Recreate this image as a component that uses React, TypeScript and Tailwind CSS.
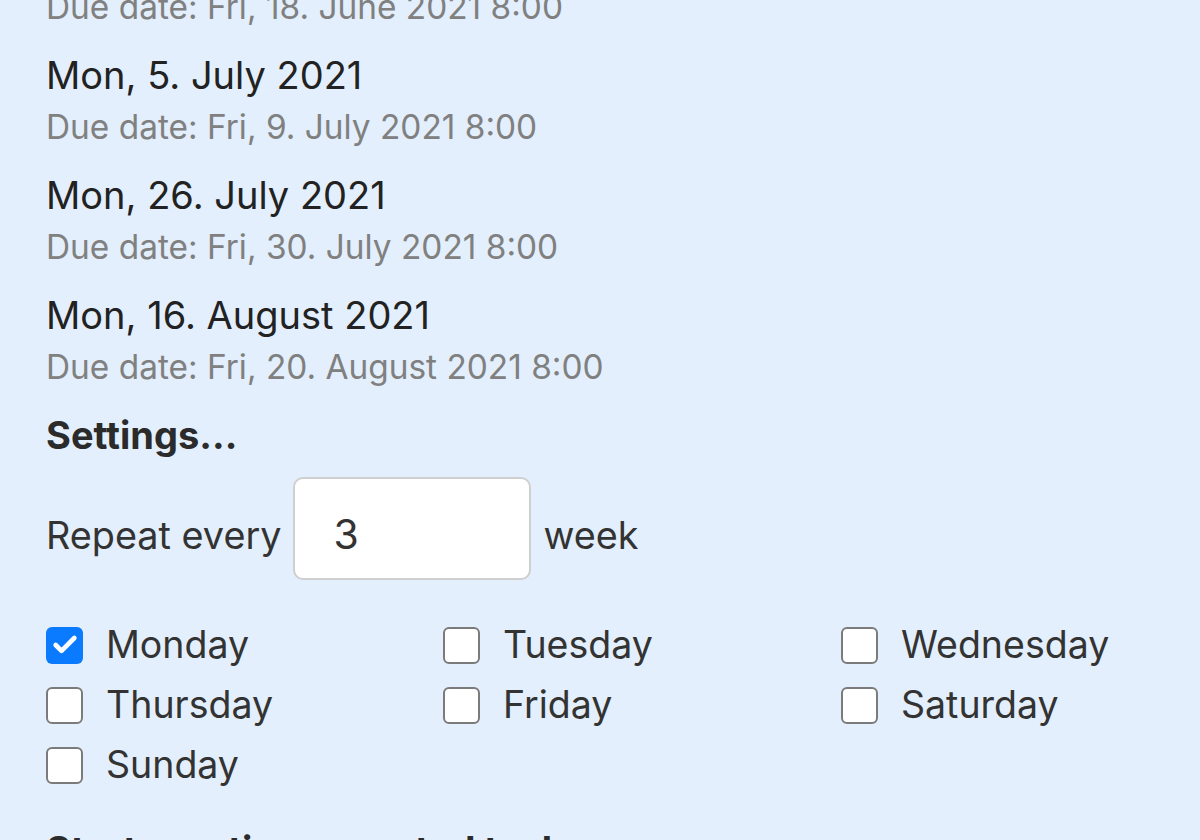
import { Check } from "lucide-react";

const entries = [
  { start: "Mon, 14. June 2021", due: "Due date: Fri, 18. June 2021 8:00" },
  { start: "Mon, 5. July 2021", due: "Due date: Fri, 9. July 2021 8:00" },
  { start: "Mon, 26. July 2021", due: "Due date: Fri, 30. July 2021 8:00" },
  { start: "Mon, 16. August 2021", due: "Due date: Fri, 20. August 2021 8:00" },
];

const days = [
  { name: "Monday", checked: true },
  { name: "Tuesday", checked: false },
  { name: "Wednesday", checked: false },
  { name: "Thursday", checked: false },
  { name: "Friday", checked: false },
  { name: "Saturday", checked: false },
  { name: "Sunday", checked: false },
];

function DayBox({ name, checked }: { name: string; checked: boolean }) {
  return (
    <label className="flex items-center gap-[23px] h-[36px]">
      {checked ? (
        <span className="flex h-[37px] w-[37px] items-center justify-center rounded-[6px] bg-[#0a7aff]">
          <Check className="h-[28px] w-[28px] text-white" strokeWidth={4} />
        </span>
      ) : (
        <span className="h-[37px] w-[37px] rounded-[6px] border-2 border-[#7b7b7b] bg-white" />
      )}
      <span className="text-[37.5px] leading-[44px] text-[#333333]">{name}</span>
    </label>
  );
}

export default function App() {
  return (
    <main
      className="h-[840px] w-full overflow-hidden bg-[#e3effc] pl-[46px]"
      style={{ fontFamily: "Inter, 'Noto Sans', sans-serif" }}
    >
      <div className="-mt-[69px]">
        {entries.map((e) => (
          <div key={e.start} className="mb-[16px]">
            <div className="text-[38px] leading-[48px] text-[#222222]">{e.start}</div>
            <div className="text-[33.4px] leading-[56px] text-[#808080]">{e.due}</div>
          </div>
        ))}

        <h2 className="mt-[20px] text-[38px] font-bold leading-[40px] text-[#2b2b2b]">Settings...</h2>

        <div className="mt-[22px] flex items-center gap-[12px] text-[37.8px] text-[#333333]">
          <span className="pt-[12px] leading-[44px]">Repeat every</span>
          <div className="flex h-[103px] w-[238px] items-center rounded-[10px] border-2 border-[#cfcfcf] bg-white pl-[38px] pt-[12px] text-[41px] text-[#333333]">
            3
          </div>
          <span className="pt-[12px] leading-[44px]">week</span>
        </div>

        <div className="mt-[47px] grid grid-cols-[397px_398px_1fr] gap-y-[24px]">
          {days.map((d) => (
            <DayBox key={d.name} name={d.name} checked={d.checked} />
          ))}
        </div>

        <h2 className="mt-[47px] text-[38px] font-bold leading-[40px] text-[#2b2b2b]">
          Start creating repeated tasks
        </h2>
      </div>
    </main>
  );
}
